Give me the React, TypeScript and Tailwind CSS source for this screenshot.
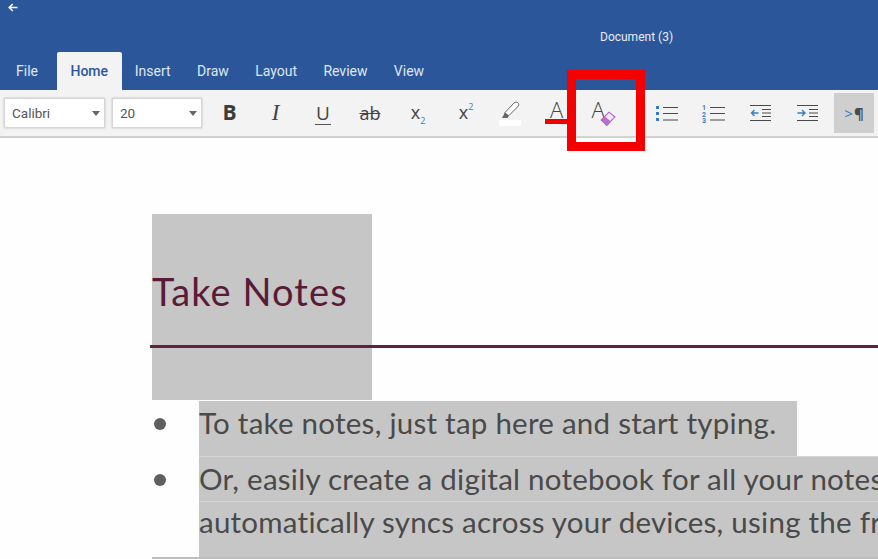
import React from "react";

const tabs = ["File", "Home", "Insert", "Draw", "Layout", "Review", "View"];
const roboto = "font-['Roboto',sans-serif]";

function Cell({ children }: { children: React.ReactNode }) {
  return <div className="w-[47px] h-[40px] flex items-center justify-center shrink-0">{children}</div>;
}

function Combo({ label, w }: { label: string; w: string }) {
  return (
    <div className={`${w} h-[30px] bg-white border border-[#d6d6d6] shadow-[0_0_2px_#bbb] flex items-center justify-between pl-[7px] pr-[4px] text-[#555] text-[13.5px] ${roboto}`}>
      <span>{label}</span>
      <span className="w-0 h-0 border-x-[4.5px] border-x-transparent border-t-[5px] border-t-[#666]" />
    </div>
  );
}

function ListIcon({ kind }: { kind: "bullet" | "number" | "out" | "in" }) {
  const blue = "#3a7cc4";
  const dark = "#4a4a4a";
  if (kind === "bullet" || kind === "number") {
    return (
      <svg width="24" height="20" viewBox="0 0 24 20">
        {kind === "bullet" ? (
          <>
            <rect x="1" y="3" width="3" height="3" fill={blue} />
            <rect x="1" y="9" width="3" height="3" fill={blue} />
            <rect x="1" y="15" width="3" height="3" fill={blue} />
          </>
        ) : (
          <g fill={blue} fontSize="7" fontFamily="Roboto" fontWeight="700">
            <text x="0" y="7">1</text>
            <text x="0" y="13.5">2</text>
            <text x="0" y="20">3</text>
          </g>
        )}
        <path d="M8 4.5h15M8 10.5h15M8 17h15" stroke={dark} strokeWidth="1" />
      </svg>
    );
  }
  return (
    <svg width="24" height="20" viewBox="0 0 24 20">
      <path d="M1 2.5h21M13 6.5h9M13 10h9M13 13.5h9M1 17.5h21" stroke={dark} strokeWidth="1" />
      {kind === "out" ? (
        <path d="M9.5 10H2.5M5.5 7L2.5 10l3 3" stroke={blue} strokeWidth="1.4" fill="none" />
      ) : (
        <path d="M1.5 10h7M6 7l3 3-3 3" stroke={blue} strokeWidth="1.4" fill="none" />
      )}
    </svg>
  );
}

export default function App() {
  return (
    <div className="relative w-[878px] h-[559px] overflow-hidden bg-[#fefefe] flex flex-col">
      <header className="h-[90px] shrink-0 bg-[#2b579a] flex flex-col">
        <div className="h-[52px] relative">
          <svg className="absolute left-[8px] top-[3px]" width="10" height="9" viewBox="0 0 10 9">
            <path d="M9.5 4.5H1.5M4.8 1L1.3 4.5 4.8 8" stroke="#f2f5fa" strokeWidth="1.7" fill="none" />
          </svg>
          <div className={`absolute left-[600px] top-[29px] text-[12px] leading-[16px] text-[#e6ecf5] ${roboto}`}>Document (3)</div>
        </div>
        <nav className={`flex pl-[3px] h-[38px] text-[14px] ${roboto}`}>
          {tabs.map((t) =>
            t === "Home" ? (
              <div key={t} className="ml-[5px] px-[13.5px] bg-[#f3f3f3] rounded-t-[2px] text-[#2b579a] font-medium flex items-center pt-[1px]">{t}</div>
            ) : (
              <div key={t} className={`${t === "File" ? "pl-[13px] pr-[14px]" : "px-[13.2px]"} text-[#dfe6f1] flex items-center pt-[1px]`}>{t}</div>
            )
          )}
        </nav>
      </header>

      <div className="h-[48px] shrink-0 bg-[#f3f3f3] border-b-2 border-[#d2d2d2] flex items-center pl-[4px]">
        <Combo label="Calibri" w="w-[101px]" />
        <div className="w-[7px]" />
        <Combo label="20" w="w-[90px]" />
        <div className="w-[4px]" />
        <Cell><span className="font-['Open_Sans',sans-serif] font-bold text-[21px] text-[#3c3c3c]">B</span></Cell>
        <Cell><span className="font-['Liberation_Serif',serif] italic text-[23px] text-[#444] -ml-[2px]">I</span></Cell>
        <Cell><span className="font-['Open_Sans',sans-serif] text-[19px] leading-[22px] text-[#444] border-b border-[#555] px-[1px] -ml-[1px]">U</span></Cell>
        <Cell><span className="font-['Open_Sans',sans-serif] text-[18px] text-[#444] line-through -ml-[1px]">ab</span></Cell>
        <Cell>
          <span className="font-['Open_Sans',sans-serif] text-[18px] text-[#444] ml-[1px] -mt-[2px]">x<sub className="text-[9px] text-[#3a7cc4] align-[-3px]">2</sub></span>
        </Cell>
        <Cell>
          <span className="font-['Open_Sans',sans-serif] text-[18px] text-[#444] ml-[3px] -mt-[1px]">x<sup className="text-[9px] text-[#3a7cc4] align-[5px]">2</sup></span>
        </Cell>
        <Cell>
          <svg className="-translate-x-[2px]" width="24" height="26" viewBox="0 0 24 26">
            <path d="M7 12.5L16 3c1.2-1.2 3-1.2 4-.2s1 2.6-.2 3.8L11 15.5l-4 .5z" fill="#fff" stroke="#666" strokeWidth="1" />
            <path d="M4 18l3-5.5 4 3-1.5 2.5z" fill="#666" />
            <rect x="1" y="20" width="22" height="6" fill="#fff" />
          </svg>
        </Cell>
        <div className="w-[47px] h-[40px] shrink-0 relative flex justify-center -translate-x-[2px]">
          <span className="font-['Open_Sans',sans-serif] font-light text-[22px] leading-[40px] text-[#444] -mt-[4px]">A</span>
          <span className="absolute left-[12px] top-[26px] h-[5px] w-[26px] bg-[#f00000]" />
        </div>
        <div className="w-[47px] h-[40px] shrink-0 relative flex justify-center -translate-x-[2px]">
          <span className="font-['Open_Sans',sans-serif] font-light text-[22px] leading-[40px] text-[#444] -mt-[4px] -ml-[11px]">A</span>
          <svg className="absolute left-[20px] top-[17px]" width="17" height="17" viewBox="0 0 16 16">
            <path d="M1 9.5L8.5 2l5.5 4.5-7.5 8z" fill="#f4e6f6" stroke="#a95fc0" strokeWidth="1" />
            <path d="M1 9.5L4.5 6l5.5 4.5-3.5 4z" fill="#b76fc9" />
          </svg>
        </div>
        <div className="w-[14px]" />
        <Cell><ListIcon kind="bullet" /></Cell>
        <Cell><ListIcon kind="number" /></Cell>
        <Cell><ListIcon kind="out" /></Cell>
        <Cell><ListIcon kind="in" /></Cell>
        <div className="w-[40px] h-[40px] ml-[3px] shrink-0 bg-[#cfcfcf] flex items-center justify-center font-['Open_Sans',sans-serif] text-[15px] font-bold text-[#4a4a4a]">
          <span className="text-[#3a7cc4] mr-[1px] font-normal">&gt;</span>¶
        </div>
      </div>

      <main className="flex-1 font-['Lato',sans-serif] pt-[76px] min-h-0">
        <section className="relative ml-[152px] w-[220px] h-[186px] bg-[#c6c6c6]">
          <h1 className="pt-[52px] text-[38px] leading-[50px] tracking-[1.1px] text-[#5a1b38] whitespace-nowrap">Take Notes</h1>
          <div className="absolute left-[-2px] top-[131px] h-[3px] w-[730px] bg-[#5e2240]" />
        </section>
        <ul className="text-[29.5px] tracking-[0.25px] text-[#4a4a4a] whitespace-nowrap mt-[1px] h-[158px] border-b-2 border-[#bdbdbd] ml-[152px] overflow-hidden">
          <li className="relative pl-[47px]">
            <span className="absolute left-[2px] top-[17px] w-[12px] h-[12px] rounded-full bg-[#5f5f5f]" />
            <div className="w-[598px] h-[55px] bg-[#c6c6c6] leading-[44px]">To take notes, just tap here and start typing.</div>
          </li>
          <li className="relative pl-[47px]">
            <span className="absolute left-[2px] top-[18px] w-[12px] h-[12px] rounded-full bg-[#5f5f5f]" />
            <div className="h-[45px] border-t border-[#d6d6d6] bg-[#c6c6c6] leading-[44px]">Or, easily create a digital notebook for all your notes</div>
            <div className="h-[56px] border-t border-[#d6d6d6] bg-[#c6c6c6] leading-[40px]">automatically syncs across your devices, using the fr</div>
          </li>
        </ul>
      </main>

      <div className="absolute left-[567px] top-[70px] w-[78px] h-[81px] border-[9px] border-[#f50000]" />
    </div>
  );
}
